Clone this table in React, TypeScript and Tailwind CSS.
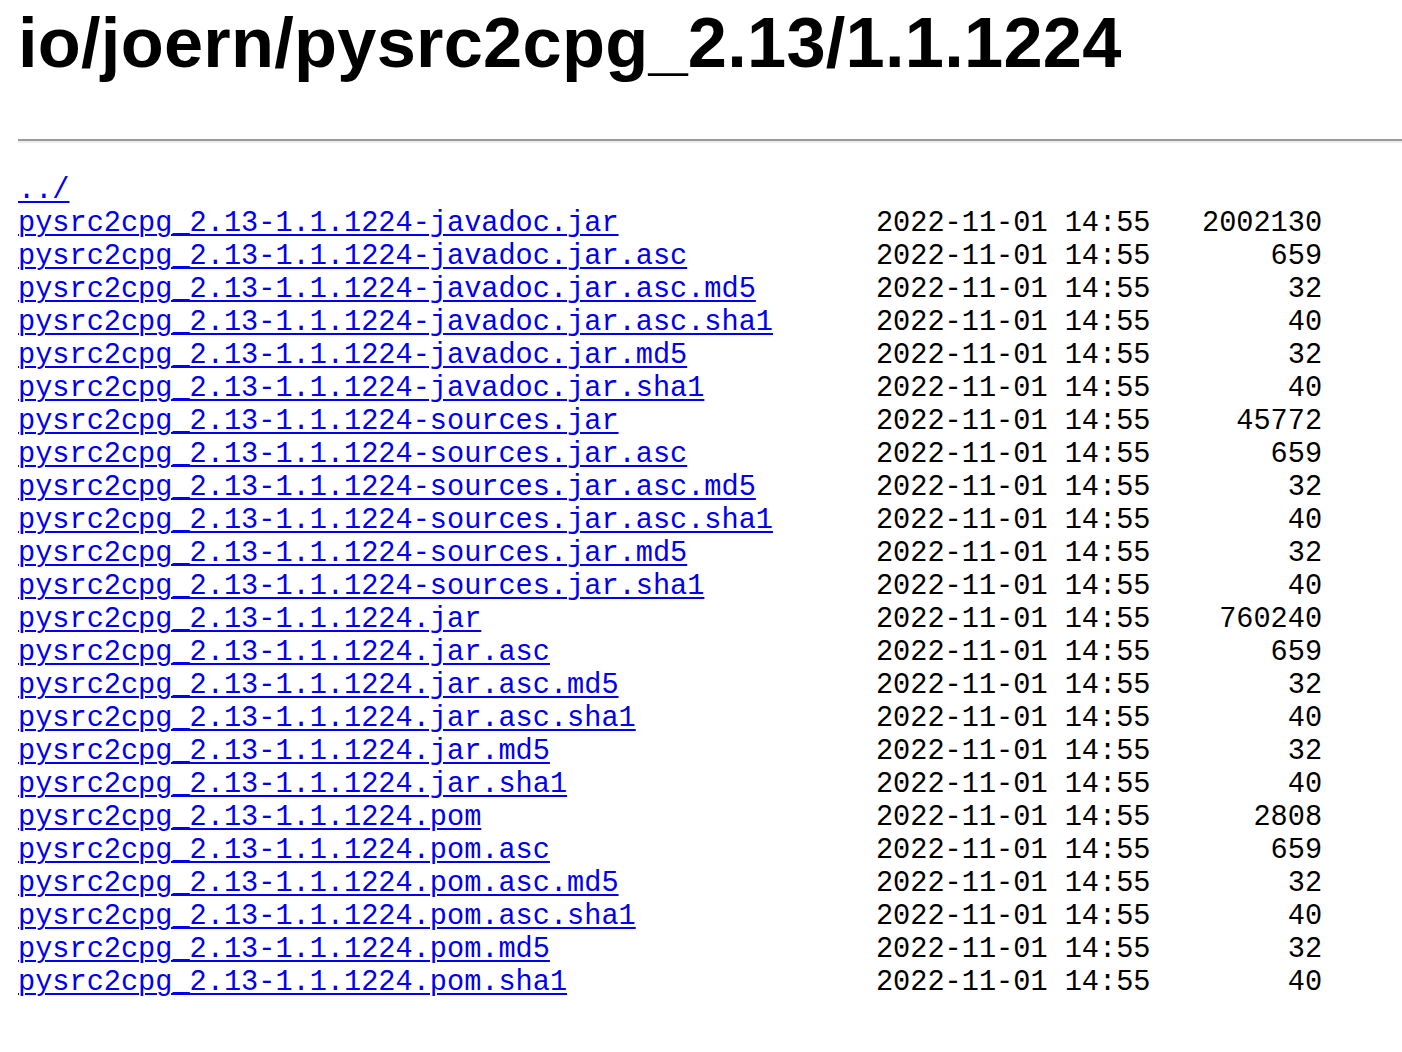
import React from "react";

const files: [string, string][] = [
  ["pysrc2cpg_2.13-1.1.1224-javadoc.jar", "2002130"],
  ["pysrc2cpg_2.13-1.1.1224-javadoc.jar.asc", "659"],
  ["pysrc2cpg_2.13-1.1.1224-javadoc.jar.asc.md5", "32"],
  ["pysrc2cpg_2.13-1.1.1224-javadoc.jar.asc.sha1", "40"],
  ["pysrc2cpg_2.13-1.1.1224-javadoc.jar.md5", "32"],
  ["pysrc2cpg_2.13-1.1.1224-javadoc.jar.sha1", "40"],
  ["pysrc2cpg_2.13-1.1.1224-sources.jar", "45772"],
  ["pysrc2cpg_2.13-1.1.1224-sources.jar.asc", "659"],
  ["pysrc2cpg_2.13-1.1.1224-sources.jar.asc.md5", "32"],
  ["pysrc2cpg_2.13-1.1.1224-sources.jar.asc.sha1", "40"],
  ["pysrc2cpg_2.13-1.1.1224-sources.jar.md5", "32"],
  ["pysrc2cpg_2.13-1.1.1224-sources.jar.sha1", "40"],
  ["pysrc2cpg_2.13-1.1.1224.jar", "760240"],
  ["pysrc2cpg_2.13-1.1.1224.jar.asc", "659"],
  ["pysrc2cpg_2.13-1.1.1224.jar.asc.md5", "32"],
  ["pysrc2cpg_2.13-1.1.1224.jar.asc.sha1", "40"],
  ["pysrc2cpg_2.13-1.1.1224.jar.md5", "32"],
  ["pysrc2cpg_2.13-1.1.1224.jar.sha1", "40"],
  ["pysrc2cpg_2.13-1.1.1224.pom", "2808"],
  ["pysrc2cpg_2.13-1.1.1224.pom.asc", "659"],
  ["pysrc2cpg_2.13-1.1.1224.pom.asc.md5", "32"],
  ["pysrc2cpg_2.13-1.1.1224.pom.asc.sha1", "40"],
  ["pysrc2cpg_2.13-1.1.1224.pom.md5", "32"],
  ["pysrc2cpg_2.13-1.1.1224.pom.sha1", "40"],
];

export default function App() {
  return (
    <div className="min-h-[1052px] bg-white pl-[18px] text-black">
      <h1 className="pt-[2px] font-['Liberation_Sans',Arial,sans-serif] text-[70.4px] font-bold leading-[81px] tracking-[0.25px] whitespace-nowrap">
        io/joern/pysrc2cpg_2.13/1.1.1224
      </h1>
      <div className="mt-[56px] h-0 border-t-2 border-b-2 border-t-[#9b9b9b] border-b-[#ededed]" />
      <pre className="mt-[31px] font-['Liberation_Mono','Courier_New',monospace] text-[28.6px] leading-[33px] whitespace-pre">
        <a href="#" className="text-[#0000ee] underline decoration-2 underline-offset-[3px]">
          ../
        </a>
        {"\n"}
        {files.map(([name, size]) => (
          <React.Fragment key={name}>
            <a href="#" className="text-[#0000ee] underline decoration-2 underline-offset-[3px]">
              {name}
            </a>
            {" ".repeat(50 - name.length) + "2022-11-01 14:55" + size.padStart(10, " ") + "\n"}
          </React.Fragment>
        ))}
      </pre>
    </div>
  );
}
